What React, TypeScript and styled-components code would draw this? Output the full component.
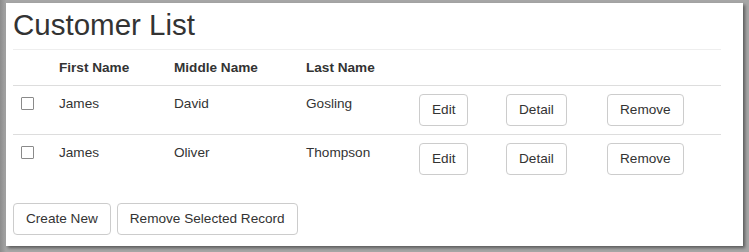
import React from 'react'
import styled, { createGlobalStyle } from 'styled-components'

const GlobalStyle = createGlobalStyle`
  html, body {
    margin: 0;
    padding: 0;
    height: 100%;
  }
  body {
    background: linear-gradient(90deg, #8c8c8c 0px, #a6a6a6 6px, #a6a6a6 100%);
    font-family: 'Liberation Sans', Arial, sans-serif;
    font-size: 13.6px;
    color: #333;
  }
  #root {
    padding: 3px 6px 6px 6px;
    box-sizing: border-box;
    height: 252px;
  }
`

type Customer = { id: number; first: string; middle: string; last: string }

const customers: Customer[] = [
  { id: 1, first: 'James', middle: 'David', last: 'Gosling' },
  { id: 2, first: 'James', middle: 'Oliver', last: 'Thompson' },
]

const columnWidths = [38, 115, 132, 113, 87, 101, 122]

// Layout

const Panel = styled.div`
  display: flex;
  flex-direction: column;
  height: 243px;
  box-sizing: border-box;
  padding: 5px 0 0 7px;
  background: #fff;
  box-shadow: 2px 2px 3px rgba(0, 0, 0, 0.45);
`

const Title = styled.h2`
  margin: 0;
  font-size: 29.5px;
  line-height: 33px;
  font-weight: 400;
  color: #333;
`

const Rule = styled.hr`
  width: 708px;
  margin: 8px 0 0 0;
  border: 0;
  border-top: 1px solid #eee;
`

const Table = styled.table`
  width: 708px;
  table-layout: fixed;
  border-collapse: collapse;
  border-spacing: 0;
`

const HeadCell = styled.th`
  padding: 8px;
  line-height: 19px;
  text-align: left;
  font-weight: 700;
  border-bottom: 1px solid #ddd;
`

const Row = styled.tr`
  & + & > td {
    border-top: 1px solid #ddd;
  }
`

const Cell = styled.td`
  padding: 8px;
  line-height: 20px;
  vertical-align: top;
`

const Check = styled.input.attrs({ type: 'checkbox' })`
  appearance: none;
  display: block;
  width: 13px;
  height: 13px;
  margin: 3px 0 0 0;
  box-sizing: border-box;
  border: 1px solid #8a8a8a;
  border-radius: 1px;
  background: #fff;
`

const Button = styled.button`
  display: inline-block;
  padding: 5px 12px;
  font-family: inherit;
  font-size: 13.6px;
  line-height: 20px;
  color: #333;
  background: #fff;
  border: 1px solid #ccc;
  border-radius: 4px;
  white-space: nowrap;
  cursor: pointer;
`

const Actions = styled.div`
  display: flex;
  gap: 6px;
  margin-top: 20px;
`

export default function App() {
  return (
    <>
      <GlobalStyle />
      <Panel>
        <Title>Customer List</Title>
        <Rule />
        <Table>
          <colgroup>
            {columnWidths.map((w, i) => (
              <col key={i} style={{ width: w }} />
            ))}
          </colgroup>
          <thead>
            <tr>
              <HeadCell />
              <HeadCell>First Name</HeadCell>
              <HeadCell>Middle Name</HeadCell>
              <HeadCell>Last Name</HeadCell>
              <HeadCell />
              <HeadCell />
              <HeadCell />
            </tr>
          </thead>
          <tbody>
            {customers.map((c) => (
              <Row key={c.id}>
                <Cell>
                  <Check />
                </Cell>
                <Cell>{c.first}</Cell>
                <Cell>{c.middle}</Cell>
                <Cell>{c.last}</Cell>
                <Cell>
                  <Button>Edit</Button>
                </Cell>
                <Cell>
                  <Button>Detail</Button>
                </Cell>
                <Cell>
                  <Button>Remove</Button>
                </Cell>
              </Row>
            ))}
          </tbody>
        </Table>
        <Actions>
          <Button>Create New</Button>
          <Button>Remove Selected Record</Button>
        </Actions>
      </Panel>
    </>
  )
}
